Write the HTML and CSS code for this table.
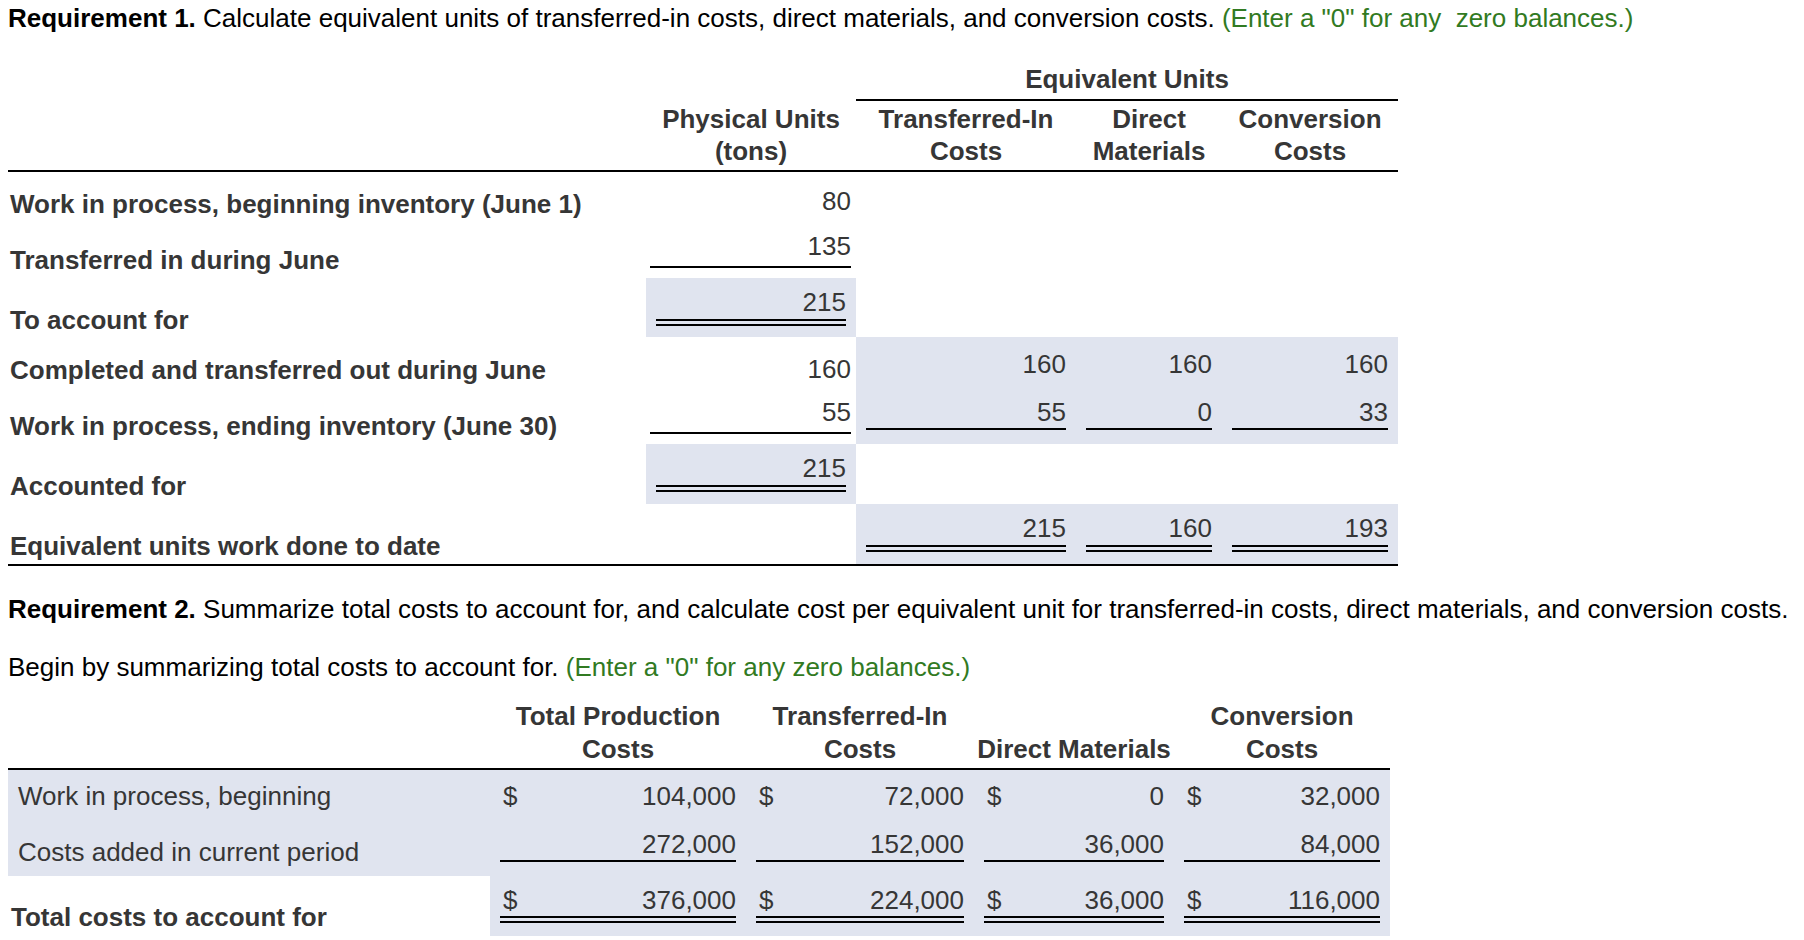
FILE: index.html
```html
<!DOCTYPE html>
<html lang="en">
<head>
<meta charset="utf-8">
<title>Equivalent units and costs</title>
<link rel="stylesheet" href="styles.css">
</head>
<body>
<p class="req"><b>Requirement 1.</b> Calculate equivalent units of transferred-in costs, direct materials, and conversion costs. <span class="hint">(Enter a "0" for any&nbsp; zero balances.)</span></p>

<div class="eu">
  <div class="blank"></div>
  <div class="blank"></div>
  <div class="grp">Equivalent Units</div>

  <div class="hd"></div>
  <div class="hd"><span>Physical Units<br>(tons)</span></div>
  <div class="hd"><span>Transferred-In<br>Costs</span></div>
  <div class="hd"><span>Direct<br>Materials</span></div>
  <div class="hd"><span>Conversion<br>Costs</span></div>

  <div class="row r1">
    <div class="c lbl">Work in process, beginning inventory (June 1)</div>
    <div class="c pu"><span class="v">80</span></div>
    <div class="c"></div><div class="c"></div><div class="c"></div>
  </div>

  <div class="row r2">
    <div class="c lbl">Transferred in during June</div>
    <div class="c pu"><span class="v u">135</span></div>
    <div class="c"></div><div class="c"></div><div class="c"></div>
  </div>

  <div class="row r3">
    <div class="c lbl">To account for</div>
    <div class="c pu sh"><span class="v dbl">215</span></div>
    <div class="c"></div><div class="c"></div><div class="c"></div>
  </div>

  <div class="row r4">
    <div class="c lbl">Completed and transferred out during June</div>
    <div class="c pu"><span class="v">160</span></div>
    <div class="c ev sh"><span class="v">160</span></div>
    <div class="c ev sh"><span class="v">160</span></div>
    <div class="c ev sh"><span class="v">160</span></div>
  </div>

  <div class="row r5">
    <div class="c lbl">Work in process, ending inventory (June 30)</div>
    <div class="c pu"><span class="v u">55</span></div>
    <div class="c ev sh"><span class="v u">55</span></div>
    <div class="c ev sh"><span class="v u">0</span></div>
    <div class="c ev sh"><span class="v u">33</span></div>
  </div>

  <div class="row r6">
    <div class="c lbl">Accounted for</div>
    <div class="c pu sh"><span class="v dbl">215</span></div>
    <div class="c"></div><div class="c"></div><div class="c"></div>
  </div>

  <div class="row r7">
    <div class="c lbl">Equivalent units work done to date</div>
    <div class="c pu"></div>
    <div class="c ev sh"><span class="v dbl">215</span></div>
    <div class="c ev sh"><span class="v dbl">160</span></div>
    <div class="c ev sh"><span class="v dbl">193</span></div>
  </div>
</div>

<p class="req req2"><b>Requirement 2.</b> Summarize total costs to account for, and calculate cost per equivalent unit for transferred-in costs, direct materials, and conversion costs.</p>
<p class="req begin">Begin by summarizing total costs to account for. <span class="hint">(Enter a "0" for any zero balances.)</span></p>

<div class="tc">
  <div class="th"></div>
  <div class="th"><span>Total Production<br>Costs</span></div>
  <div class="th"><span>Transferred-In<br>Costs</span></div>
  <div class="th"><span>Direct Materials</span></div>
  <div class="th"><span>Conversion<br>Costs</span></div>

  <div class="row t1">
    <div class="c tl sh">Work in process, beginning</div>
    <div class="c m sh"><span class="in"><span>$</span><span>104,000</span></span></div>
    <div class="c m sh"><span class="in"><span>$</span><span>72,000</span></span></div>
    <div class="c m sh"><span class="in"><span>$</span><span>0</span></span></div>
    <div class="c m sh"><span class="in"><span>$</span><span>32,000</span></span></div>
  </div>

  <div class="row t2">
    <div class="c tl sh">Costs added in current period</div>
    <div class="c m sh"><span class="in u"><span></span><span>272,000</span></span></div>
    <div class="c m sh"><span class="in u"><span></span><span>152,000</span></span></div>
    <div class="c m sh"><span class="in u"><span></span><span>36,000</span></span></div>
    <div class="c m sh"><span class="in u"><span></span><span>84,000</span></span></div>
  </div>

  <div class="row t3">
    <div class="c tl tot">Total costs to account for</div>
    <div class="c m sh"><span class="in dbl"><span>$</span><span>376,000</span></span></div>
    <div class="c m sh"><span class="in dbl"><span>$</span><span>224,000</span></span></div>
    <div class="c m sh"><span class="in dbl"><span>$</span><span>36,000</span></span></div>
    <div class="c m sh"><span class="in dbl"><span>$</span><span>116,000</span></span></div>
  </div>
</div>
</body>
</html>
```

FILE: styles.css
```css
* {
  box-sizing: border-box;
}

html,
body {
  margin: 0;
  padding: 0;
  background: #ffffff;
}

body {
  font-family: "Liberation Sans", Arial, Helvetica, sans-serif;
  font-size: 26px;
  color: #000000;
  padding: 3px 8px 0 8px;
}

.req {
  margin: 0;
  line-height: 30px;
  white-space: nowrap;
}

.hint {
  color: #317a22;
}

.req2 {
  margin-top: 28px;
}

.begin {
  margin-top: 28px;
}

.row {
  display: contents;
}

.sh {
  background: #e0e4ef;
}

.c {
  display: flex;
  align-items: flex-end;
  line-height: 30px;
  white-space: nowrap;
}

.v {
  flex: 1;
  text-align: right;
}

.u {
  border-bottom: 2px solid #000000;
}

.dbl {
  border-bottom: 7px double #000000;
}

/* ---------- Table 1: equivalent units ---------- */

.eu {
  display: grid;
  grid-template-columns: 638px 210px 220px 146px 176px;
  grid-template-rows: auto auto 50px 56px 59px 51px 56px 60px 62px;
  margin-top: 27px;
  color: #363636;
}

.grp {
  grid-column: 3 / 6;
  text-align: center;
  font-weight: bold;
  line-height: 30px;
  padding: 4px 0 5px;
  border-bottom: 2px solid #000000;
}

.hd {
  display: flex;
  flex-direction: column;
  justify-content: flex-end;
  text-align: center;
  font-weight: bold;
  line-height: 32px;
  padding: 2px 0 3px;
  border-bottom: 2px solid #000000;
}

.lbl {
  font-weight: bold;
  padding-left: 2px;
  padding-bottom: 3px;
}

.pu {
  padding: 0 5px 0 4px;
}

.pu.sh {
  padding: 0 10px;
}

.ev {
  padding: 0 10px;
}

.r1 .pu {
  padding-bottom: 6px;
}

.r2 .pu {
  padding-bottom: 10px;
}

.r2 .v {
  padding-bottom: 5px;
}

.r3 .lbl {
  padding-bottom: 2px;
}

.r3 .pu {
  padding-bottom: 11px;
}

.r3 .v {
  padding-bottom: 2px;
}

.r4 .pu {
  padding-bottom: 4px;
}

.r4 .ev {
  padding-bottom: 9px;
}

.r5 .pu {
  padding-bottom: 10px;
}

.r5 .pu .v {
  padding-bottom: 5px;
}

.r5 .ev {
  padding-bottom: 14px;
}

.r5 .ev .v {
  padding-bottom: 1px;
}

.r6 .pu {
  padding-bottom: 12px;
}

.r6 .v {
  padding-bottom: 2px;
}

.r7 > .c {
  border-bottom: 2px solid #000000;
}

.r7 .lbl {
  padding-bottom: 3px;
}

.r7 .ev {
  padding-bottom: 12px;
}

.r7 .v {
  padding-bottom: 2px;
}

/* ---------- Table 2: costs ---------- */

.tc {
  display: grid;
  grid-template-columns: 482px 256px 228px 200px 216px;
  grid-template-rows: auto 50px 56px 60px;
  margin-top: 18px;
  color: #363636;
}

.th {
  display: flex;
  flex-direction: column;
  justify-content: flex-end;
  text-align: center;
  font-weight: bold;
  line-height: 33px;
  padding-bottom: 2px;
  border-bottom: 2px solid #000000;
}

.tl {
  padding-left: 10px;
  padding-bottom: 9px;
}

.tl.tot {
  font-weight: bold;
  padding-left: 3px;
  padding-bottom: 4px;
}

.m {
  padding: 0 10px 9px;
}

.in {
  flex: 1;
  display: flex;
  justify-content: space-between;
  padding-left: 3px;
}

.t2 .m {
  padding-bottom: 14px;
}

.t2 .in {
  padding-bottom: 1px;
}

.t3 .m {
  padding-bottom: 13px;
}

.t3 .in {
  padding-bottom: 1px;
}
```
